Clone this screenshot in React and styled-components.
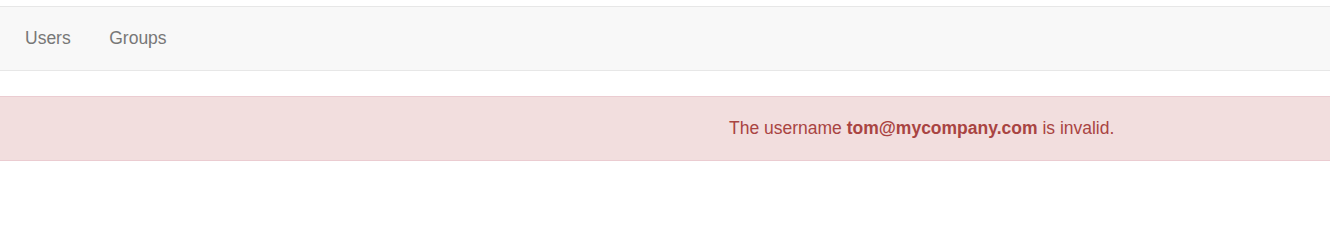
import React from "react";
import styled, { createGlobalStyle } from "styled-components";

const Global = createGlobalStyle`
  html, body { margin: 0; padding: 0; background: #fff; }
  body { font-family: "Liberation Sans", Arial, sans-serif; }
`;

const Page = styled.div`
  padding-top: 6px;
  display: flex;
  flex-direction: column;
  gap: 25px;
`;

const Navbar = styled.nav`
  height: 63px;
  background: #f8f8f8;
  border-top: 1px solid #e7e7e7;
  border-bottom: 1px solid #e7e7e7;
  display: flex;
  align-items: center;
  padding-left: 25px;
  gap: 38.5px;
`;

const NavLink = styled.a`
  color: #777;
  font-size: 17.5px;
  text-decoration: none;
  cursor: pointer;
`;

const Alert = styled.div`
  height: 63px;
  background: #f2dede;
  border-top: 1px solid #ebccd1;
  border-bottom: 1px solid #ebccd1;
  color: #a94442;
  font-size: 17.5px;
  display: flex;
  align-items: center;
  padding-left: 729px;
`;

const Strong = styled.strong`
  font-weight: bold;
`;

export default function App() {
  return (
    <>
      <Global />
      <Page>
        <Navbar>
          <NavLink>Users</NavLink>
          <NavLink>Groups</NavLink>
        </Navbar>
        <Alert>
          <span>
            The username <Strong>tom@mycompany.com</Strong> is invalid.
          </span>
        </Alert>
      </Page>
    </>
  );
}
